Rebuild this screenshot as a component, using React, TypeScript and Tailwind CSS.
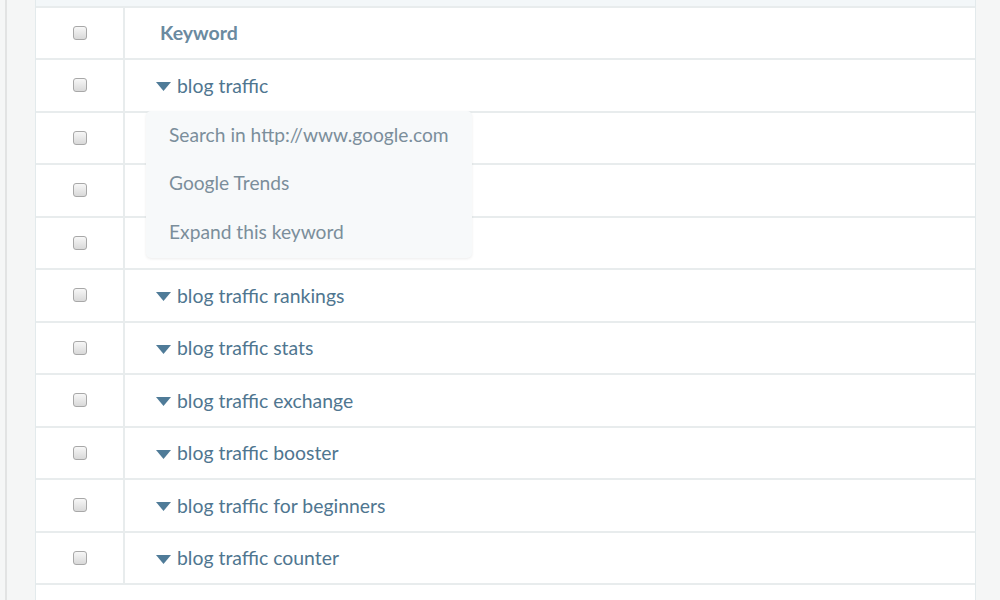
import React from 'react';

const keywords = [
  'blog traffic',
  '',
  '',
  '',
  'blog traffic rankings',
  'blog traffic stats',
  'blog traffic exchange',
  'blog traffic booster',
  'blog traffic for beginners',
  'blog traffic counter',
];

const menuItems = ['Search in http://www.google.com', 'Google Trends', 'Expand this keyword'];

const Checkbox = () => (
  <span className="block w-[14px] h-[14px] rounded-[3px] border border-[#a8a8a8] bg-gradient-to-b from-[#f7f7f7] to-[#d9d9d9]" />
);

const Caret = () => (
  <svg width="15" height="9" viewBox="0 0 15 9" className="mr-[6px] mt-[3px] shrink-0">
    <polygon points="0,0 15,0 7.5,9" fill="#4f7b98" />
  </svg>
);

const Row = ({ text }: { text?: string }) => (
  <div className="flex h-[52.5px] border-t-2 border-[#e8eced] bg-white">
    <div className="w-[89px] flex items-center justify-center border-r-2 border-[#e8eced]">
      <Checkbox />
    </div>
    <div className="flex-1 flex items-center pl-[31px]">
      {text && (
        <>
          <Caret />
          <span className="text-[19.4px] text-[#4f7690]">{text}</span>
        </>
      )}
    </div>
  </div>
);

export default function App() {
  return (
    <div
      className="w-[1000px] h-[600px] overflow-hidden flex bg-[#f5f6f6]"
      style={{ fontFamily: 'Lato, "Open Sans", sans-serif' }}
    >
      <div className="w-[5px]" />
      <div className="w-[2px] bg-[#e2e3e3]" />
      <div className="w-[28px]" />
      <div className="w-[941px] relative border-x border-[#e3eaec] bg-white">
        <div className="h-[6px] bg-[#f3f7f9]" />
        <div className="flex h-[52px] border-t-2 border-[#e8eced] bg-white">
          <div className="w-[89px] flex items-center justify-center border-r-2 border-[#e8eced]">
            <Checkbox />
          </div>
          <div className="flex-1 flex items-center pl-[35px]">
            <span className="text-[19.5px] font-bold text-[#6a8aa0]">Keyword</span>
          </div>
        </div>
        {keywords.map((k, i) => (
          <Row key={i} text={k} />
        ))}
        <div className="h-[20px] border-t-2 border-[#e8eced] bg-white" />

        <div className="absolute left-[110px] top-[111px] w-[326px] h-[147px] rounded-[5px] bg-[#f7f9fa] shadow-[0_1px_3px_rgba(0,0,0,0.08)]">
          {menuItems.map((m) => (
            <div key={m} className="h-[48.5px] flex items-center pl-[23px] text-[19.2px] text-[#7b8e9b]">
              {m}
            </div>
          ))}
        </div>
      </div>
      <div className="flex-1" />
    </div>
  );
}
